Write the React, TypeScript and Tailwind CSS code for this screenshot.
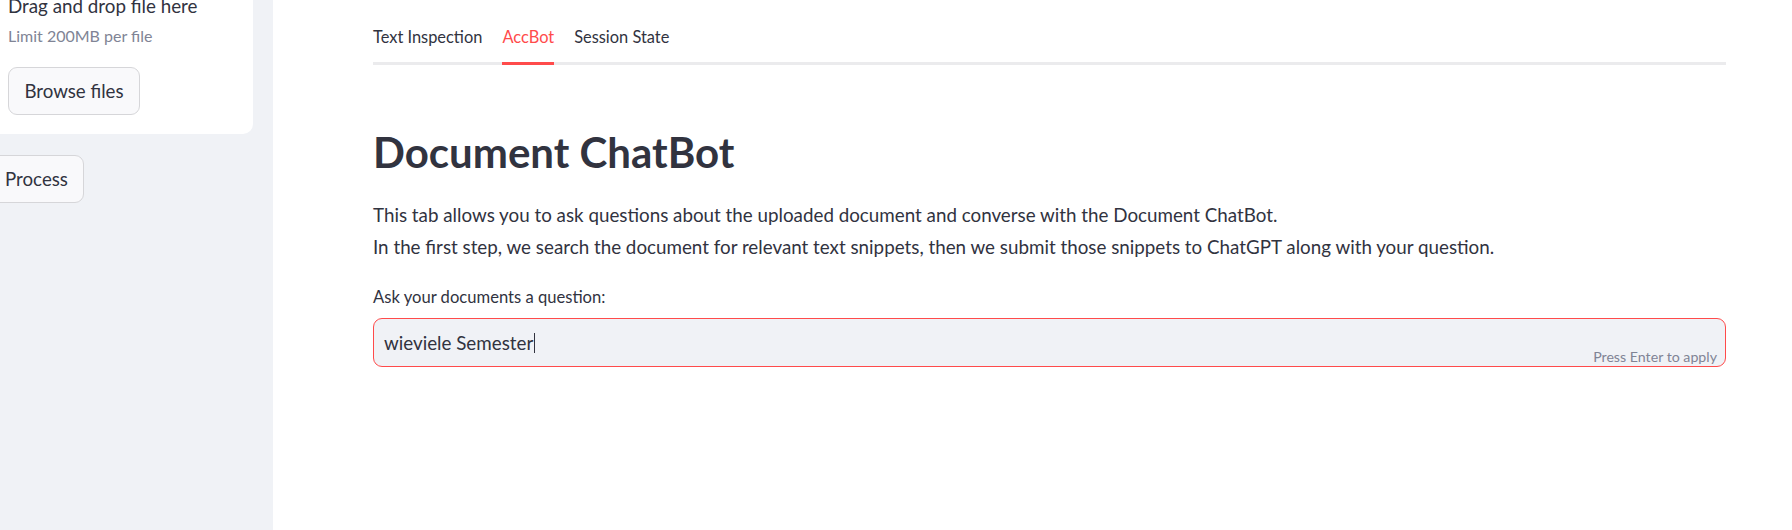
import React from "react";

const F = { fontFamily: "Lato, 'Noto Sans', sans-serif" };

export default function App() {
  return (
    <div className="relative flex h-[530px] w-[1792px] overflow-hidden bg-white text-[#31333f]" style={F}>
      <aside className="w-[273px] shrink-0 bg-[#f0f2f6]">
        <div className="-ml-[20px] w-[273px] rounded-br-[10px] bg-white pb-[19px] pl-[28px]">
          <div className="-mt-[4px] text-[18.8px] leading-[20px]">Drag and drop file here</div>
          <div className="mt-[10px] text-[16px] leading-[20px] text-[#808495]">Limit 200MB per file</div>
          <button className="mt-[21px] flex h-[48px] w-[132px] items-center justify-center rounded-[9px] border border-[#d6d6d9] bg-[#f9f9fb] text-[18.7px] leading-[24px]">
            Browse files
          </button>
        </div>
        <button className="-ml-[11px] mt-[21px] flex h-[48px] w-[95px] items-center justify-center rounded-[9px] border border-[#d6d6d9] bg-[#f9f9fb] text-[18.7px] leading-[24px]">
          Process
        </button>
      </aside>
      <main className="flex-1 pl-[100px] pr-[66px]">
        <div className="mt-[25px] flex gap-[20px] border-b-[3px] border-[#ebebed] text-[16.4px]">
          <div className="pb-[13px] leading-[24px]">Text Inspection</div>
          <div className="-mb-[3px] border-b-[3px] border-[#ff4b4b] pb-[13px] leading-[24px] text-[#ff4b4b]">AccBot</div>
          <div className="pb-[13px] leading-[24px]">Session State</div>
        </div>
        <h1 className="mt-[59px] text-[42px] font-bold leading-[56px]">Document ChatBot</h1>
        <div className="mt-[19px] text-[18.8px] leading-[32px]">
          <p>This tab allows you to ask questions about the uploaded document and converse with the Document ChatBot.</p>
          <p>In the first step, we search the document for relevant text snippets, then we submit those snippets to ChatGPT along with your question.</p>
        </div>
        <label className="mt-[22px] block text-[16.6px] leading-[24px]">Ask your documents a question:</label>
        <div className="relative mt-[9px] flex h-[49px] items-center rounded-[9px] border border-[#ff4b4b] bg-[#f0f2f6] pl-[10px]">
          <span className="text-[18.8px] leading-[24px]">wieviele Semester</span>
          <span className="ml-[1px] h-[20px] w-[1px] bg-[#31333f]" />
          <span className="absolute bottom-[1px] right-[8px] text-[14.2px] leading-[16px] text-[#808495]">Press Enter to apply</span>
        </div>
      </main>
    </div>
  );
}
